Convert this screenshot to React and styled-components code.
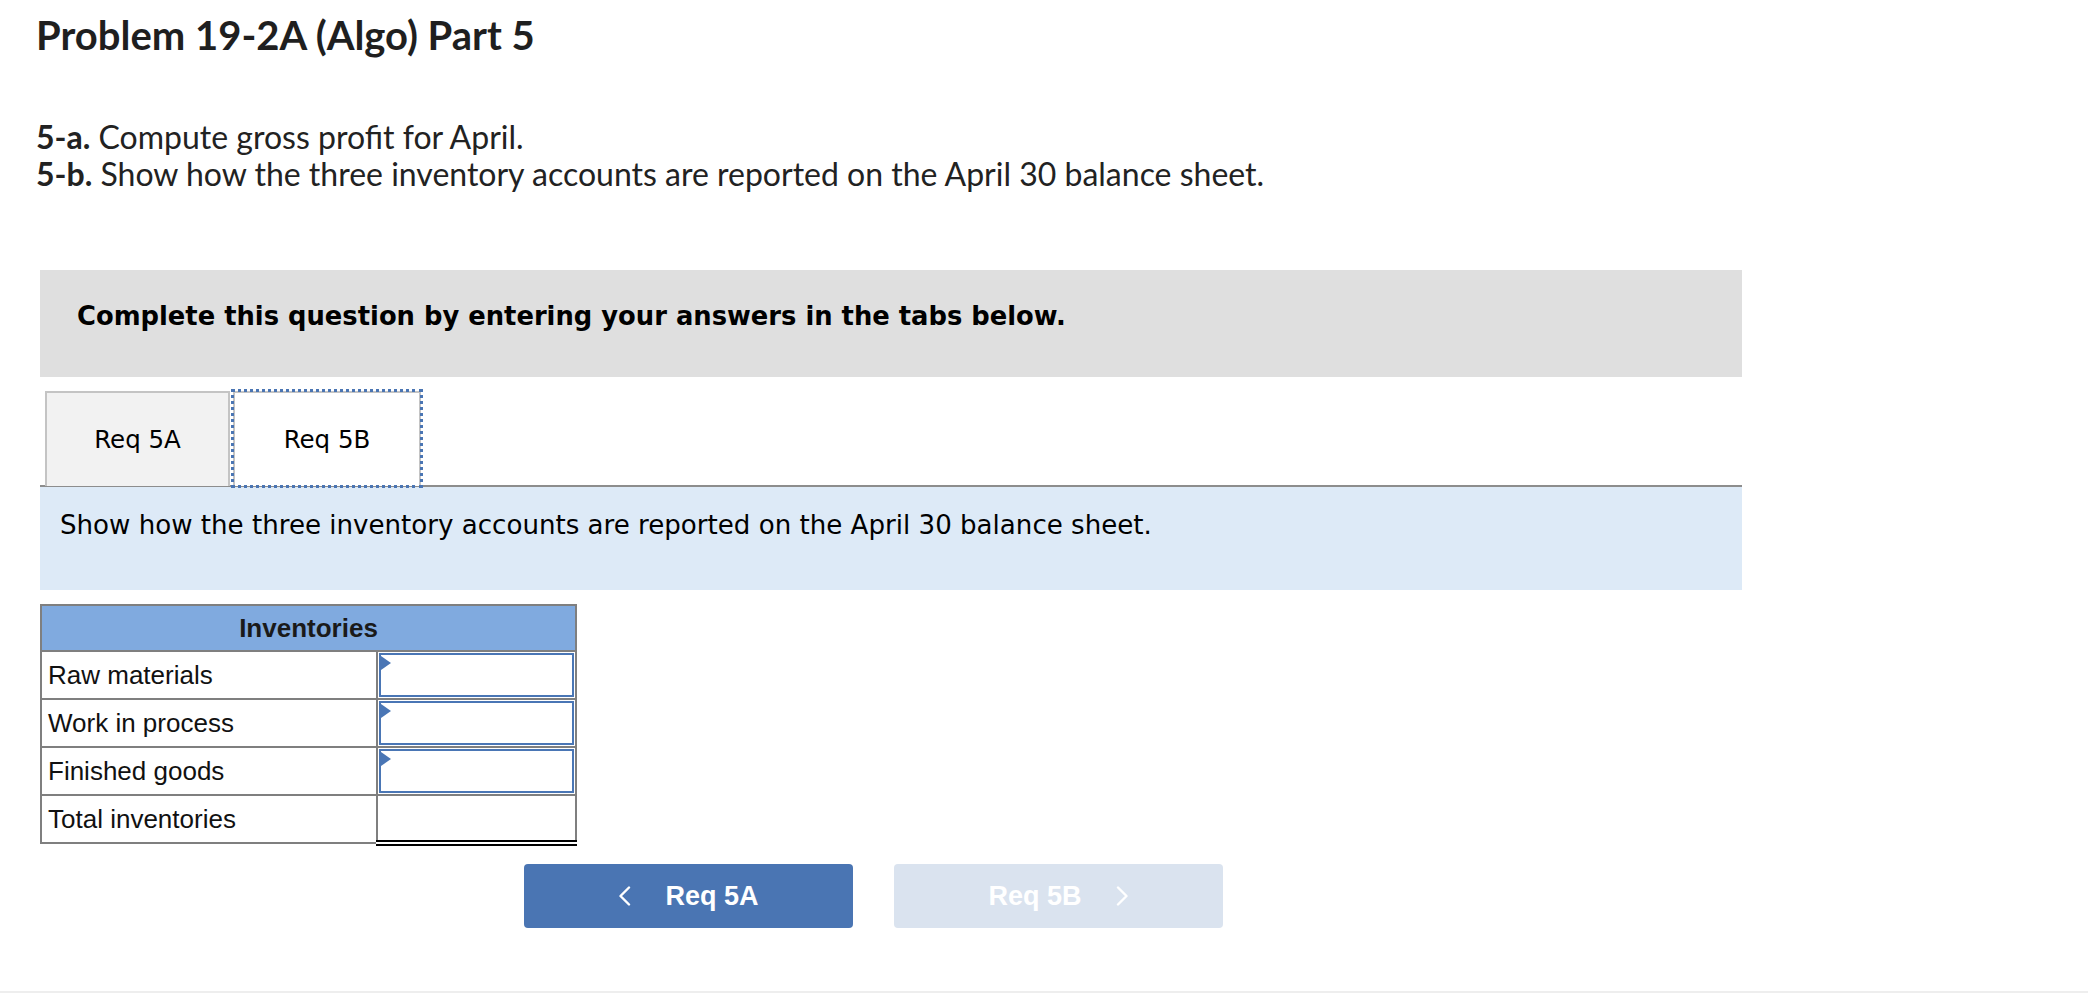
import React from 'react';
import styled, { createGlobalStyle } from 'styled-components';

const GlobalStyle = createGlobalStyle`
  html, body {
    margin: 0;
    padding: 0;
    background: #fff;
  }
  * {
    box-sizing: border-box;
  }
`;

const Page = styled.div`
  width: 2088px;
  min-height: 1000px;
  padding-left: 36px;
  color: #222;
`;

const Title = styled.h1`
  margin: 0;
  padding-top: 13px;
  font: 700 40px/44px Lato, sans-serif;
  color: #1f1f1f;
`;

const Intro = styled.div`
  margin-top: 61px;
  font: 400 32px/37px Lato, sans-serif;
  color: #222;

  b {
    font-weight: 700;
  }
`;

const Question = styled.div`
  margin-top: 78px;
  margin-left: 4px;
  width: 1702px;
`;

const Instructions = styled.div`
  height: 107px;
  padding: 28px 37px 0;
  background: #dfdfdf;
  font: 700 25.8px/36px 'DejaVu Sans', Verdana, sans-serif;
  color: #000;
`;

const TabBar = styled.div`
  display: flex;
  margin-top: 14px;
  padding-left: 5px;
  border-bottom: 2px solid #8d8d8d;
`;

const Tab = styled.div`
  display: flex;
  align-items: center;
  justify-content: center;
  width: ${(p) => (p.$active ? 188 : 185)}px;
  height: 95px;
  margin-left: ${(p) => (p.$active ? 3 : 0)}px;
  margin-bottom: -1px;
  border: 2px solid #c4c4c4;
  border-bottom: none;
  background: ${(p) => (p.$active ? '#fff' : '#f2f2f2')};
  outline: ${(p) => (p.$active ? '3px dotted #4a75b3' : 'none')};
  outline-offset: -1px;
  font: 400 24.5px 'DejaVu Sans', Verdana, sans-serif;
  color: #000;
`;

const Prompt = styled.div`
  height: 103px;
  padding: 20px 20px 0;
  background: #ddeaf7;
  font: 400 26.1px/36px 'DejaVu Sans', Verdana, sans-serif;
  color: #000;
`;

const Table = styled.table`
  margin-top: 14px;
  border-collapse: collapse;
  width: 537px;
  font: 400 26px 'Liberation Sans', Arial, sans-serif;
  color: #111;
`;

const HeadCell = styled.th`
  height: 46px;
  padding: 0;
  background: #80aadf;
  border: 2px solid #7f7f7f;
  font-weight: 700;
  text-align: center;
  color: #1a1a1a;
`;

const LabelCell = styled.td`
  width: 337px;
  height: 48px;
  padding: 0 6px;
  border: 2px solid #7f7f7f;
`;

const ValueCell = styled.td`
  width: 200px;
  height: 48px;
  padding: 1px;
  border: 2px solid #7f7f7f;
  ${(p) =>
    p.$total &&
    `
    border-top: 2px solid #000;
    border-bottom: 6px double #000;
  `}
`;

const Input = styled.div`
  position: relative;
  height: 44px;
  border: 2px solid #4a76b5;
  background: #fff;

  &::before {
    content: '';
    position: absolute;
    left: 0;
    top: 1px;
    border-top: 7px solid transparent;
    border-bottom: 7px solid transparent;
    border-left: 10px solid #4a76b5;
  }
`;

const Nav = styled.div`
  display: flex;
  gap: 41px;
  margin-top: 18px;
  padding-left: 488px;
`;

const NavButton = styled.button`
  display: flex;
  align-items: center;
  justify-content: center;
  gap: 34px;
  width: 329px;
  height: 64px;
  padding: 0;
  border: none;
  border-radius: 4px;
  background: ${(p) => (p.disabled ? '#dae3ef' : '#4a75b3')};
  color: #fff;
  font: 700 27px 'Liberation Sans', Arial, sans-serif;
  cursor: ${(p) => (p.disabled ? 'default' : 'pointer')};
`;

const Footer = styled.div`
  margin-top: 63px;
  margin-left: -36px;
  height: 2px;
  background: #eeeeee;
`;

const Chevron = ({ dir }) => (
  <svg width="13" height="20" viewBox="0 0 13 20" fill="none">
    <polyline
      points={dir === 'left' ? '11,1.5 2.5,10 11,18.5' : '2,1.5 10.5,10 2,18.5'}
      stroke="#fff"
      strokeWidth="2.4"
      strokeLinecap="round"
      strokeLinejoin="round"
    />
  </svg>
);

const rows = [
  { label: 'Raw materials', input: true },
  { label: 'Work in process', input: true },
  { label: 'Finished goods', input: true },
  { label: 'Total inventories', input: false },
];

export default function App() {
  return (
    <Page>
      <GlobalStyle />
      <Title>Problem 19-2A (Algo) Part 5</Title>
      <Intro>
        <div>
          <b>5-a.</b> Compute gross profit for April.
        </div>
        <div>
          <b>5-b.</b> Show how the three inventory accounts are reported on the April 30 balance sheet.
        </div>
      </Intro>
      <Question>
        <Instructions>Complete this question by entering your answers in the tabs below.</Instructions>
        <TabBar>
          <Tab>Req 5A</Tab>
          <Tab $active>Req 5B</Tab>
        </TabBar>
        <Prompt>Show how the three inventory accounts are reported on the April 30 balance sheet.</Prompt>
        <Table>
          <thead>
            <tr>
              <HeadCell colSpan={2}>Inventories</HeadCell>
            </tr>
          </thead>
          <tbody>
            {rows.map((r) => (
              <tr key={r.label}>
                <LabelCell>{r.label}</LabelCell>
                <ValueCell $total={!r.input}>{r.input && <Input />}</ValueCell>
              </tr>
            ))}
          </tbody>
        </Table>
      </Question>
      <Nav>
        <NavButton>
          <Chevron dir="left" />
          <span>Req 5A</span>
        </NavButton>
        <NavButton disabled>
          <span>Req 5B</span>
          <Chevron dir="right" />
        </NavButton>
      </Nav>
      <Footer />
    </Page>
  );
}
